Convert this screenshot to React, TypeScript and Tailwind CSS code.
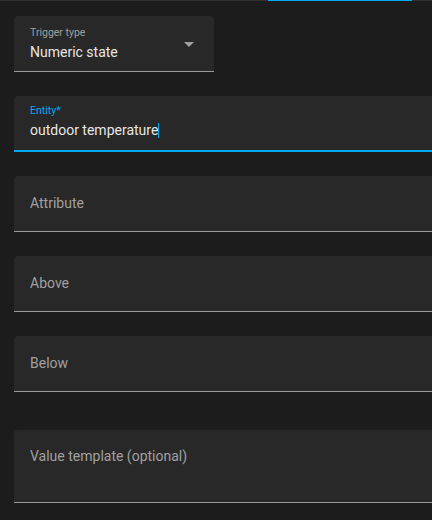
import React from "react";

function Field({ label }: { label: string }) {
  return (
    <div className="h-[56px] w-[440px] rounded-t-[4px] bg-[#282828] border-b border-[#9a9a9a] flex items-center pl-4 pb-[2px]">
      <span className="text-[14px] leading-5 text-[#a0a0a0]">{label}</span>
    </div>
  );
}

export default function App() {
  return (
    <div className="w-[432px] h-[520px] bg-[#1c1c1c] overflow-hidden font-['Roboto',sans-serif]">
      <div className="flex h-px">
        <div className="w-[268px] bg-[#2e2e2e]" />
        <div className="w-[144px] bg-[#03a9f4]" />
        <div className="flex-1 bg-[#2e2e2e]" />
      </div>
      <div className="pl-[14px] pt-[15px] flex flex-col">
        <div className="h-[56px] w-[200px] rounded-t-[4px] bg-[#282828] border-b border-[#9a9a9a] flex items-start justify-between pl-4 pr-5">
          <div className="flex flex-col pt-[10px]">
            <span className="text-[10.5px] leading-[14px] text-[#a0a0a0]">Trigger type</span>
            <span className="text-[14px] leading-5 text-[#e6e6e6] mt-[2px]">Numeric state</span>
          </div>
          <div className="mt-[26px] w-0 h-0 border-l-[5px] border-r-[5px] border-t-[5px] border-l-transparent border-r-transparent border-t-[#a0a0a0]" />
        </div>

        <div className="mt-6 h-[56px] w-[440px] rounded-t-[4px] bg-[#282828] border-b-2 border-[#03a9f4] flex flex-col pl-4 pt-[8px]">
          <span className="text-[10.5px] leading-[14px] text-[#03a9f4]">Entity*</span>
          <div className="flex items-center mt-[2px]">
            <span className="text-[14px] leading-5 text-[#e6e6e6]">outdoor temperature</span>
            <span className="w-px h-[15px] bg-[#03a9f4]" />
          </div>
        </div>

        <div className="mt-6">
          <Field label="Attribute" />
        </div>
        <div className="mt-6">
          <Field label="Above" />
        </div>
        <div className="mt-6">
          <Field label="Below" />
        </div>

        <div className="mt-[38px] h-[73px] w-[440px] rounded-t-[4px] bg-[#282828] border-b border-[#9a9a9a] pl-4 pt-[14px]">
          <span className="text-[14px] leading-5 text-[#a0a0a0]">Value template (optional)</span>
        </div>
      </div>
    </div>
  );
}
